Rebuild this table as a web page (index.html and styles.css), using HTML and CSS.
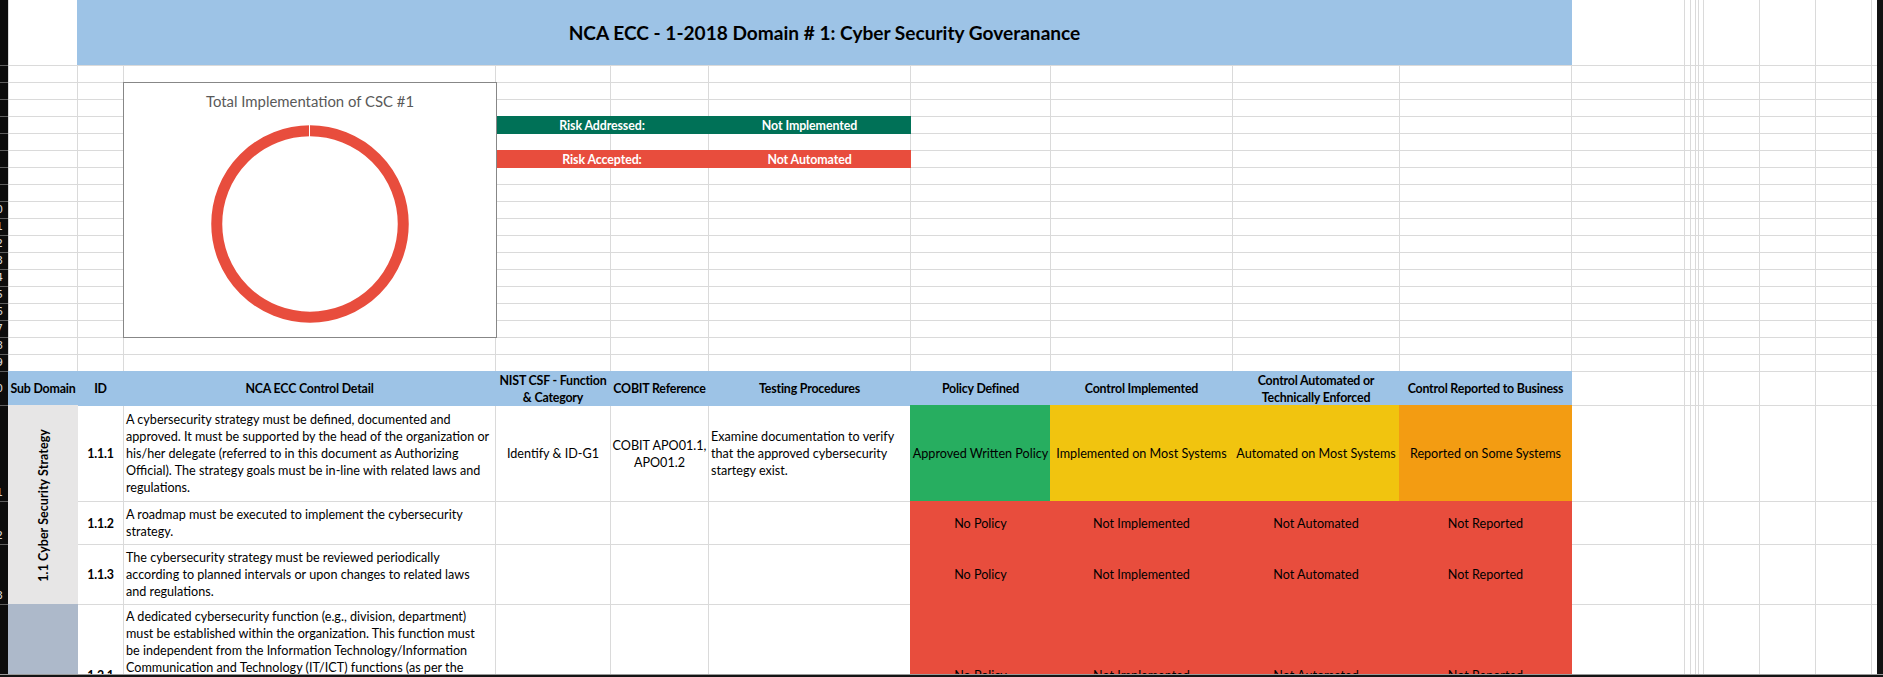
FILE: index.html
```html
<!DOCTYPE html>
<html lang="en">
<head>
<meta charset="utf-8">
<title>NCA ECC Domain 1</title>
<link rel="stylesheet" href="styles.css">
</head>
<body>
<div class="window">
  <div class="sheet">
    <!-- row 1 -->
    <div class="rh"><span>1</span></div>
    <div class="cell"></div>
    <div class="cell title">NCA ECC - 1-2018 Domain # 1: Cyber Security Goveranance</div>
    <div class="cell"></div><div class="cell"></div><div class="cell"></div><div class="cell"></div><div class="cell"></div><div class="cell"></div><div class="cell"></div><div class="cell"></div><div class="cell"></div>

    <!-- rows 2-19: row headers -->
    <div class="rh"><span>2</span></div>
    <div class="rh"><span>3</span></div>
    <div class="rh"><span>4</span></div>
    <div class="rh"><span>5</span></div>
    <div class="rh"><span>6</span></div>
    <div class="rh"><span>7</span></div>
    <div class="rh"><span>8</span></div>
    <div class="rh"><span>9</span></div>
    <div class="rh"><span>10</span></div>
    <div class="rh"><span>11</span></div>
    <div class="rh"><span>12</span></div>
    <div class="rh"><span>13</span></div>
    <div class="rh"><span>14</span></div>
    <div class="rh"><span>15</span></div>
    <div class="rh"><span>16</span></div>
    <div class="rh"><span>17</span></div>
    <div class="rh"><span>18</span></div>
    <div class="rh"><span>19</span></div>

    <!-- rows 2-19: empty columns -->
    <div class="blankcol ca"></div>
    <div class="blankcol cb"></div>
    <div class="blankcol cc"></div>
    <div class="blankcol cd"></div>
    <div class="blankcol ce"></div>
    <div class="blankcol cf"></div>
    <div class="blankcol cg"></div>
    <div class="blankcol ch"></div>
    <div class="blankcol ci"></div>
    <div class="blankcol cj"></div>
    <div class="blankcol ck"></div>
    <div class="blankcol cl"></div>
    <div class="blankcol cm"></div>
    <div class="blankcol cn"></div>
    <div class="blankcol co"></div>
    <div class="blankcol cp"></div>
    <div class="blankcol cq"></div>
    <div class="blankcol cr"></div>
    <div class="blankcol cs"></div>

    <div class="bar bar-addressed"><div class="bar-label">Risk Addressed:</div><div class="bar-value">Not Implemented</div></div>
    <div class="bar bar-accepted"><div class="bar-label">Risk Accepted:</div><div class="bar-value">Not Automated</div></div>

    <!-- row 20: header -->
    <div class="rh"><span>20</span></div>
    <div class="cell hd">Sub Domain</div>
    <div class="cell hd">ID</div>
    <div class="cell hd">NCA ECC Control Detail</div>
    <div class="cell hd"><div><span class="ln">NIST CSF - Function</span><span class="ln">&amp; Category</span></div></div>
    <div class="cell hd">COBIT Reference</div>
    <div class="cell hd">Testing Procedures</div>
    <div class="cell hd">Policy Defined</div>
    <div class="cell hd">Control Implemented</div>
    <div class="cell hd"><div><span class="ln">Control Automated or</span><span class="ln">Technically Enforced</span></div></div>
    <div class="cell hd">Control Reported to Business</div>
    <div class="cell"></div><div class="cell"></div><div class="cell"></div><div class="cell"></div><div class="cell"></div><div class="cell"></div><div class="cell"></div><div class="cell"></div><div class="cell"></div>

    <!-- row 21 -->
    <div class="rh bot"><span>21</span></div>
    <div class="cell sub sub-strategy"><span class="vert">1.1 Cyber Security Strategy</span></div>
    <div class="cell id">1.1.1</div>
    <div class="cell left"><div><span class="ln">A cybersecurity strategy must be defined, documented and</span><span class="ln">approved. It must be supported by the head of the organization or</span><span class="ln">his/her delegate (referred to in this document as Authorizing</span><span class="ln">Official). The strategy goals must be in-line with related laws and</span><span class="ln">regulations.</span></div></div>
    <div class="cell">Identify &amp; ID-G1</div>
    <div class="cell"><div><span class="ln">COBIT APO01.1,</span><span class="ln">APO01.2</span></div></div>
    <div class="cell left"><div><span class="ln">Examine documentation to verify</span><span class="ln">that the approved cybersecurity</span><span class="ln">startegy exist.</span></div></div>
    <div class="cell st-green">Approved Written Policy</div>
    <div class="cell st-yellow">Implemented on Most Systems</div>
    <div class="cell st-yellow">Automated on Most Systems</div>
    <div class="cell st-orange">Reported on Some Systems</div>
    <div class="cell"></div><div class="cell"></div><div class="cell"></div><div class="cell"></div><div class="cell"></div><div class="cell"></div><div class="cell"></div><div class="cell"></div><div class="cell"></div>

    <!-- row 22 -->
    <div class="rh bot"><span>22</span></div>
    <div class="cell id">1.1.2</div>
    <div class="cell left"><div><span class="ln">A roadmap must be executed to implement the cybersecurity</span><span class="ln">strategy.</span></div></div>
    <div class="cell"></div>
    <div class="cell"></div>
    <div class="cell"></div>
    <div class="cell st-red">No Policy</div>
    <div class="cell st-red">Not Implemented</div>
    <div class="cell st-red">Not Automated</div>
    <div class="cell st-red">Not Reported</div>
    <div class="cell"></div><div class="cell"></div><div class="cell"></div><div class="cell"></div><div class="cell"></div><div class="cell"></div><div class="cell"></div><div class="cell"></div><div class="cell"></div>

    <!-- row 23 -->
    <div class="rh bot"><span>23</span></div>
    <div class="cell id">1.1.3</div>
    <div class="cell left"><div><span class="ln">The cybersecurity strategy must be reviewed periodically</span><span class="ln">according to planned intervals or upon changes to related laws</span><span class="ln">and regulations.</span></div></div>
    <div class="cell"></div>
    <div class="cell"></div>
    <div class="cell"></div>
    <div class="cell st-red">No Policy</div>
    <div class="cell st-red">Not Implemented</div>
    <div class="cell st-red">Not Automated</div>
    <div class="cell st-red">Not Reported</div>
    <div class="cell"></div><div class="cell"></div><div class="cell"></div><div class="cell"></div><div class="cell"></div><div class="cell"></div><div class="cell"></div><div class="cell"></div><div class="cell"></div>

    <!-- row 24 -->
    <div class="rh bot"><span>24</span></div>
    <div class="cell sub sub-dept"></div>
    <div class="cell id">1.2.1</div>
    <div class="cell left"><div><span class="ln">A dedicated cybersecurity function (e.g., division, department)</span><span class="ln">must be established within the organization. This function must</span><span class="ln">be independent from the Information Technology/Information</span><span class="ln">Communication and Technology (IT/ICT) functions (as per the</span><span class="ln">Royal Decree number 37140 dated 14/8/1438H). It is highly</span><span class="ln">recommended that this cybersecurity function reports directly to</span><span class="ln">the head of the organization or his/her delegate while ensuring</span><span class="ln">that this does not result in a conflict of interest.</span></div></div>
    <div class="cell"></div>
    <div class="cell"></div>
    <div class="cell"></div>
    <div class="cell st-red">No Policy</div>
    <div class="cell st-red">Not Implemented</div>
    <div class="cell st-red">Not Automated</div>
    <div class="cell st-red">Not Reported</div>
    <div class="cell"></div><div class="cell"></div><div class="cell"></div><div class="cell"></div><div class="cell"></div><div class="cell"></div><div class="cell"></div><div class="cell"></div><div class="cell"></div>

    <!-- floating chart object -->
    <div class="chart">
      <div class="chart-title">Total Implementation of CSC #1</div>
      <svg class="donut" width="200" height="200" viewBox="0 0 200 200" aria-hidden="true">
        <circle cx="100" cy="100" r="93.25" fill="none" stroke="#e84d3d" stroke-width="11"/>
        <line x1="99.5" y1="0" x2="99.5" y2="14" stroke="#ffffff" stroke-width="1"/>
      </svg>
    </div>
  </div>
  <div class="vscroll"></div>
</div>
<div class="hscroll"></div>
</body>
</html>
```

FILE: styles.css
```css
* { box-sizing: border-box; margin: 0; padding: 0; }

html, body {
  width: 1883px;
  height: 677px;
  overflow: hidden;
  background: #ffffff;
}

body {
  display: flex;
  flex-direction: column;
  font-family: Lato, "Open Sans", "Liberation Sans", sans-serif;
  color: #000000;
  --fs: 12.6px;
  --fsb: 12.4px;
}

.window {
  display: flex;
  height: 674px;
  overflow: hidden;
  flex: none;
}

.sheet {
  position: relative;
  flex: none;
  width: 1877px;
  display: grid;
  grid-template-columns: 8px 68px 45px 371px 114px 97px 201px 139px 181px 166px 171px 112px 5px 4px 2px 4px 55px 55px 55px 5px;
  grid-template-rows: 65px repeat(18, 16px) 33px 95px 42px 59px 141px;
  column-gap: 1px;
  row-gap: 1px;
  align-content: start;
  background: #dadada;
}

.vscroll {
  flex: none;
  width: 6px;
  background: #121212;
}

.hscroll {
  flex: none;
  height: 3px;
  border-top: 1px solid #9a9a9a;
  background: #141414;
}

/* row headers (cut off at the window edge) */
.rh {
  background: #0c0c0c;
  overflow: hidden;
  display: flex;
  align-items: center;
  box-shadow: 0 1px 0 #5e5e5e;
}
.rh.bot { align-items: flex-end; padding-bottom: 2px; }
.rh span {
  flex: none;
  width: 24px;
  margin-left: -16px;
  text-align: center;
  font: 11px/12px "DejaVu Sans", sans-serif;
  color: #d8d8d8;
}

/* cells */
.cell {
  background: #ffffff;
  display: flex;
  align-items: center;
  justify-content: center;
  text-align: center;
  font-size: var(--fs);
  line-height: 17px;
  white-space: nowrap;
  overflow: hidden;
}
.cell .ln { display: block; }
.cell.left { justify-content: flex-start; text-align: left; padding-left: 2px; }
.cell.id { font-weight: 700; font-size: var(--fsb); letter-spacing: -0.2px; }

.title {
  grid-column: span 9;
  background: #9dc3e6;
  box-shadow: -1px 0 0 #9dc3e6, 1px 0 0 #9dc3e6;
  font-size: 19.1px;
  font-weight: 700;
  overflow: visible;
}

.hd {
  background: #9dc3e6;
  box-shadow: 0 0 0 1px #9dc3e6;
  font-weight: 700;
  font-size: var(--fsb);
  letter-spacing: -0.2px;
  overflow: visible;
}

.sub { overflow: visible; }
.sub-strategy {
  grid-row: span 3;
  background: #e7e6e6;
  box-shadow: 0 0 0 1px #e7e6e6;
}
.sub-dept {
  background: #adb9ca;
  box-shadow: 0 0 0 1px #adb9ca;
}
.vert {
  writing-mode: vertical-rl;
  transform: rotate(180deg);
  font-weight: 700;
  font-size: var(--fsb);
  letter-spacing: 0.1px;
}

.st-green  { background: #27ae60; box-shadow: 0 0 0 1px #27ae60; }
.st-yellow { background: #f1c40f; box-shadow: 0 0 0 1px #f1c40f; }
.st-orange { background: #f39c12; box-shadow: 0 0 0 1px #f39c12; }
.st-red    { background: #e84d3d; box-shadow: 0 0 0 1px #e84d3d; overflow: visible; }

/* empty cells of rows 2-19, one strip per column */
.blankcol {
  grid-row: 2 / 20;
  background: repeating-linear-gradient(to bottom, #ffffff 0 16px, #dadada 16px 17px);
}
.ca { grid-column: 2; }
.cb { grid-column: 3; }
.cc { grid-column: 4; }
.cd { grid-column: 5; }
.ce { grid-column: 6; }
.cf { grid-column: 7; }
.cg { grid-column: 8; }
.ch { grid-column: 9; }
.ci { grid-column: 10; }
.cj { grid-column: 11; }
.ck { grid-column: 12; }
.cl { grid-column: 13; }
.cm { grid-column: 14; }
.cn { grid-column: 15; }
.co { grid-column: 16; }
.cp { grid-column: 17; }
.cq { grid-column: 18; }
.cr { grid-column: 19; }
.cs { grid-column: 20; }

/* risk bars */
.bar {
  grid-column: 5 / 8;
  margin: -1px -1px -1px 0;
  display: grid;
  grid-template-columns: 212px 1fr;
  align-items: center;
  color: #ffffff;
  font-weight: 700;
  font-size: var(--fsb);
  letter-spacing: -0.1px;
  line-height: 17px;
  text-align: center;
  white-space: nowrap;
}
.bar-addressed { grid-row: 5; background: #007157; }
.bar-accepted  { grid-row: 7; background: #e84d3d; }

/* chart object floating over the grid */
.chart {
  position: absolute;
  left: 123px;
  top: 82px;
  width: 374px;
  height: 256px;
  border: 1px solid #878787;
  background: #ffffff;
  display: flex;
  flex-direction: column;
  align-items: center;
  padding-top: 7px;
}
.chart-title {
  font-size: 14.9px;
  line-height: 22px;
  color: #595959;
  white-space: nowrap;
}
.donut {
  display: block;
  margin-top: 12px;
  flex: none;
}
```
